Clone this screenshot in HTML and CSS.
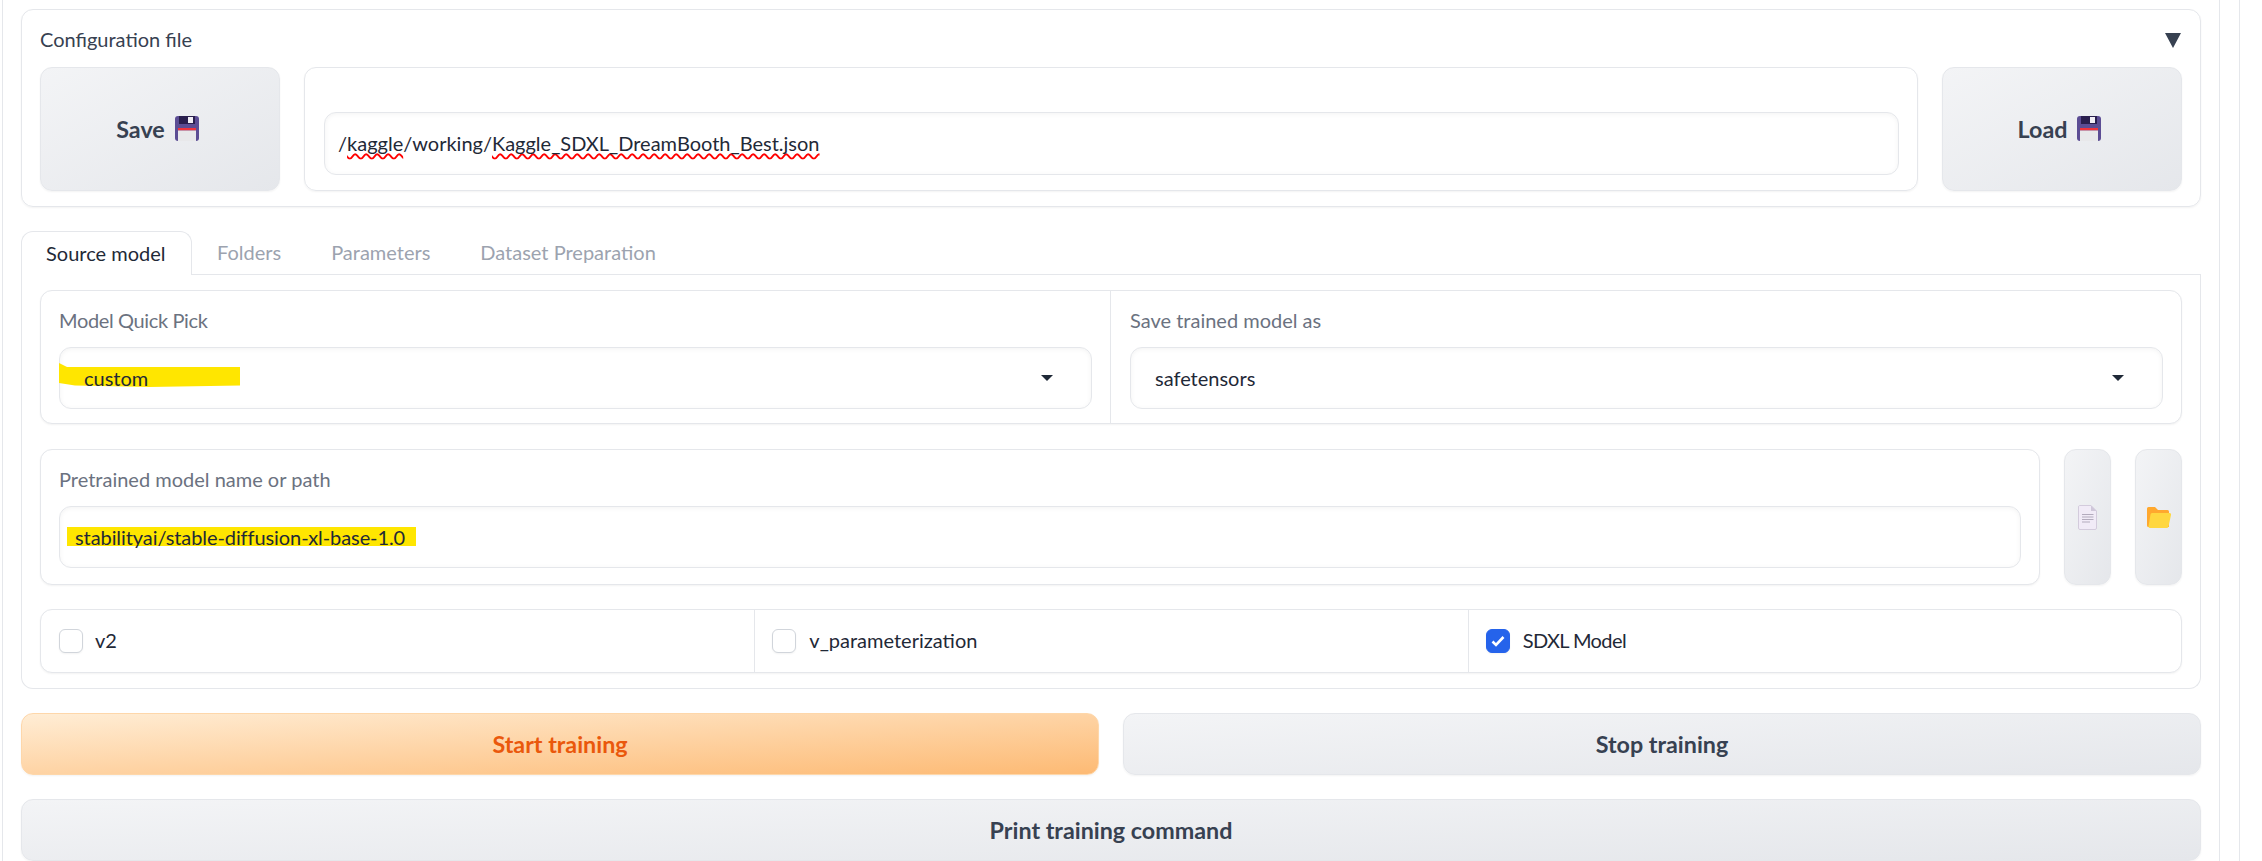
FILE: index.html
```html
<!DOCTYPE html>
<html lang="en">
<head>
<meta charset="utf-8">
<title>Kaggle SDXL DreamBooth</title>
<link rel="stylesheet" href="styles.css">
</head>
<body>
<div class="outer">
<main class="frame">
  <section class="config">
    <div class="config-head">
      <span class="config-label">Configuration file</span>
      <svg class="caret" width="16" height="15" viewBox="0 0 16 15"><path d="M0 0H16L8 15Z" fill="#374151"/></svg>
    </div>
    <div class="config-row">
      <button class="btn btn-side">Save
        <svg class="floppy" width="24" height="25" viewBox="0 0 24 25"><rect width="24" height="25" rx="3" fill="#5c4d94"/><rect x="4" width="16" height="8" fill="#2a1f4e"/><rect x="13" y="1" width="5" height="6" fill="#f1eef5"/><rect x="3" y="12" width="18" height="2.5" fill="#f0333d"/><rect x="3" y="14.5" width="18" height="10.5" fill="#e8e8ea"/></svg>
      </button>
      <div class="config-field">
        <div class="input input-text"><span>/<span class="spell">kaggle</span>/working/<span class="spell">Kaggle_SDXL_DreamBooth_Best.json</span></span></div>
      </div>
      <button class="btn btn-side">Load
        <svg class="floppy" width="24" height="25" viewBox="0 0 24 25"><rect width="24" height="25" rx="3" fill="#5c4d94"/><rect x="4" width="16" height="8" fill="#2a1f4e"/><rect x="13" y="1" width="5" height="6" fill="#f1eef5"/><rect x="3" y="12" width="18" height="2.5" fill="#f0333d"/><rect x="3" y="14.5" width="18" height="10.5" fill="#e8e8ea"/></svg>
      </button>
    </div>
  </section>

  <nav class="tabs">
    <span class="tab tab-active">Source model</span>
    <span class="tab">Folders</span>
    <span class="tab">Parameters</span>
    <span class="tab">Dataset Preparation</span>
  </nav>

  <section class="panel">
    <div class="card picks">
      <div class="pick">
        <div class="field-label label-tight">Model Quick Pick</div>
        <div class="input input-select">
          <svg class="mark mark-custom" width="181" height="25" viewBox="0 0 181 25"><path d="M0 0L8 4H181V22.500L90 24L16 22.500L0 20Z" fill="#ffe600"/></svg>
          <span class="value">custom</span>
          <svg class="arrow" width="12" height="6" viewBox="0 0 12 6"><path d="M0 0H12L6 6Z" fill="#1f2937"/></svg>
        </div>
      </div>
      <div class="pick pick-divided">
        <div class="field-label">Save trained model as</div>
        <div class="input input-select">
          <span class="value">safetensors</span>
          <svg class="arrow" width="12" height="6" viewBox="0 0 12 6"><path d="M0 0H12L6 6Z" fill="#1f2937"/></svg>
        </div>
      </div>
    </div>

    <div class="path-row">
      <div class="card path-card">
        <div class="field-label">Pretrained model name or path</div>
        <div class="input input-text input-path">
          <span class="mark mark-path"></span>
          <span class="value">stabilityai/stable-diffusion-xl-base-1.0</span>
        </div>
      </div>
      <button class="btn btn-icon">
        <svg width="19" height="25" viewBox="0 0 19 25"><path d="M1.500 0.500H13L18.500 6V23a1.500 1.500 0 0 1-1.500 1.500H2A1.500 1.500 0 0 1 .5 23V2A1.500 1.500 0 0 1 1.500 .5Z" fill="#f1ebf7" stroke="#d3cbdc"/><path d="M13 .5V6H18.500Z" fill="#cfc7d9"/><path d="M4 9.500H15.500M4 12H15.500M4 14.500H15.500M4 17H12" stroke="#b3abbd" stroke-width="1.200"/></svg>
      </button>
      <button class="btn btn-icon">
        <svg width="24" height="21" viewBox="0 0 24 21"><path d="M1.500 0H8L11 3H20.500A1.500 1.500 0 0 1 22 4.500V20H1.500A1.500 1.500 0 0 1 0 18.500V1.500A1.500 1.500 0 0 1 1.500 0Z" fill="#ffa82e"/><path d="M5 6H22.500A1.500 1.500 0 0 1 24 8L21.500 19.500A1.800 1.800 0 0 1 20 21H3A1.500 1.500 0 0 1 1.500 19.500L3.500 7.500A1.800 1.800 0 0 1 5 6Z" fill="#ffd740"/></svg>
      </button>
    </div>

    <div class="card checks">
      <label class="check"><span class="box"></span><span class="check-text">v2</span></label>
      <label class="check check-divided"><span class="box"></span><span class="check-text">v_parameterization</span></label>
      <label class="check check-divided"><span class="box box-on"><svg width="14" height="12" viewBox="0 0 14 12"><path d="M1.500 6.500L5 10L12.500 2" fill="none" stroke="#fff" stroke-width="2.600"/></svg></span><span class="check-text label-tighter">SDXL Model</span></label>
    </div>
  </section>

  <div class="actions">
    <button class="btn btn-wide btn-primary">Start training</button>
    <button class="btn btn-wide">Stop training</button>
  </div>
  <button class="btn btn-wide btn-print">Print training command</button>
</main>
</div>
</body>
</html>
```

FILE: styles.css
```css
* { box-sizing: border-box; }
html, body { margin: 0; padding: 0; height: 861px; overflow: hidden; background: #fff; }
body { font-family: "Lato", "Open Sans", sans-serif; font-size: 20px; line-height: 26px; color: #1f2937; }

.outer { width: 2240px; height: 861px; border-right: 1px solid #e5e7eb; }
.frame { margin-left: 2px; width: 2218px; height: 861px; padding: 9px 18px 0 18px; border-left: 1px solid #e5e7eb; border-right: 1px solid #e5e7eb; }

.btn {
  border: 1px solid #e5e7eb; border-radius: 12px; font: inherit; font-size: 23.3px; font-weight: 700;
  color: #374151; background: linear-gradient(to bottom right, #f3f4f6, #e5e7eb);
  box-shadow: 0 1px 2px rgba(0,0,0,.05); display: flex; align-items: center; justify-content: center; padding: 0;
}

.config { height: 198px; border: 1px solid #e5e7eb; border-radius: 12px; padding: 0 18px 15px 18px; box-shadow: 0 1px 2px rgba(0,0,0,.05); }
.config-head { height: 57px; display: flex; justify-content: space-between; align-items: center; }
.config-label { color: #374151; }
.caret { margin-top: 3px; margin-right: 1px; }
.config-row { display: flex; gap: 24px; height: 124px; }
.btn-side { width: 240px; flex: none; gap: 10px; }
.floppy { margin-right: 5px; margin-top: -1px; }
.config-field { flex: 1; border: 1px solid #e5e7eb; border-radius: 12px; padding: 44px 18px 15px 19px; box-shadow: 0 1px 2px rgba(0,0,0,.05); }

.input { position: relative; height: 62px; border: 1px solid #e5e7eb; border-radius: 12px; display: flex; align-items: center; box-shadow: inset 0 1px 5px rgba(0,0,0,.05); background: #fff; }
.input-text { padding: 0 13px 2px; height: 63px; }
.input-select { padding: 0 38px 0 24px; justify-content: space-between; }
.spell { text-decoration: underline wavy #f00 1.5px; text-underline-offset: 2px; text-decoration-skip-ink: none; }
.value { position: relative; }

.tabs { display: flex; height: 44px; margin-top: 24px; border-bottom: 1px solid #e5e7eb; color: #9ca3af; }
.tab { padding: 8px 25px 0 25px; }
.tab-active { width: 171px; height: 44px; padding-left: 24px; padding-right: 0; color: #1f2937; background: #fff; border: 1px solid #e5e7eb; border-bottom: 0; border-radius: 12px 12px 0 0; }

.panel { height: 414px; border: 1px solid #e5e7eb; border-top: 0; border-radius: 0 0 12px 12px; padding: 15px 18px 0 18px; }
.card { border: 1px solid #e5e7eb; border-radius: 12px; box-shadow: 0 1px 2px rgba(0,0,0,.05); background: #fff; }
.field-label { color: #6b7280; margin-bottom: 14px; }
.label-tight { letter-spacing: -0.36px; }
.label-tighter { letter-spacing: -0.6px; }

.picks { display: flex; height: 134px; }
.pick { flex: 1; padding: 16px 18px 0 18px; }
.pick-divided { border-left: 1px solid #e5e7eb; padding-left: 19px; }
.mark { position: absolute; }
.mark-custom { left: -1px; top: 15px; }

.path-row { display: flex; gap: 24px; height: 136px; margin-top: 25px; }
.path-card { flex: 1; padding: 16px 18px 0 18px; }
.input-path { height: 62px; padding: 0 15px; letter-spacing: -0.08px; }
.mark-path { left: 7px; top: 20px; width: 349px; height: 19px; background: #ffe600; }
.btn-icon { width: 47px; flex: none; }

.checks { display: flex; height: 64px; margin-top: 24px; }
.check { flex: 1; display: flex; align-items: center; gap: 12px; padding-left: 18px; color: #1f2937; }
.check-text { margin-top: -2px; }
.check-divided { border-left: 1px solid #e5e7eb; padding-left: 17px; gap: 13px; }
.box { width: 24px; height: 24px; flex: none; border: 1px solid #d1d5db; border-radius: 6px; background: #fff; display: flex; align-items: center; justify-content: center; box-shadow: 0 1px 2px rgba(0,0,0,.05); }
.box-on { background: #2563eb; border-color: #2563eb; }

.actions { display: flex; gap: 24px; margin-top: 24px; }
.btn-wide { flex: 1; height: 62px; }
.btn-print { width: 100%; margin-top: 24px; }
.btn-primary { color: #ea580c; border-color: #fed7aa; background: linear-gradient(to bottom right, #ffedd5, #fdba74); }
```
